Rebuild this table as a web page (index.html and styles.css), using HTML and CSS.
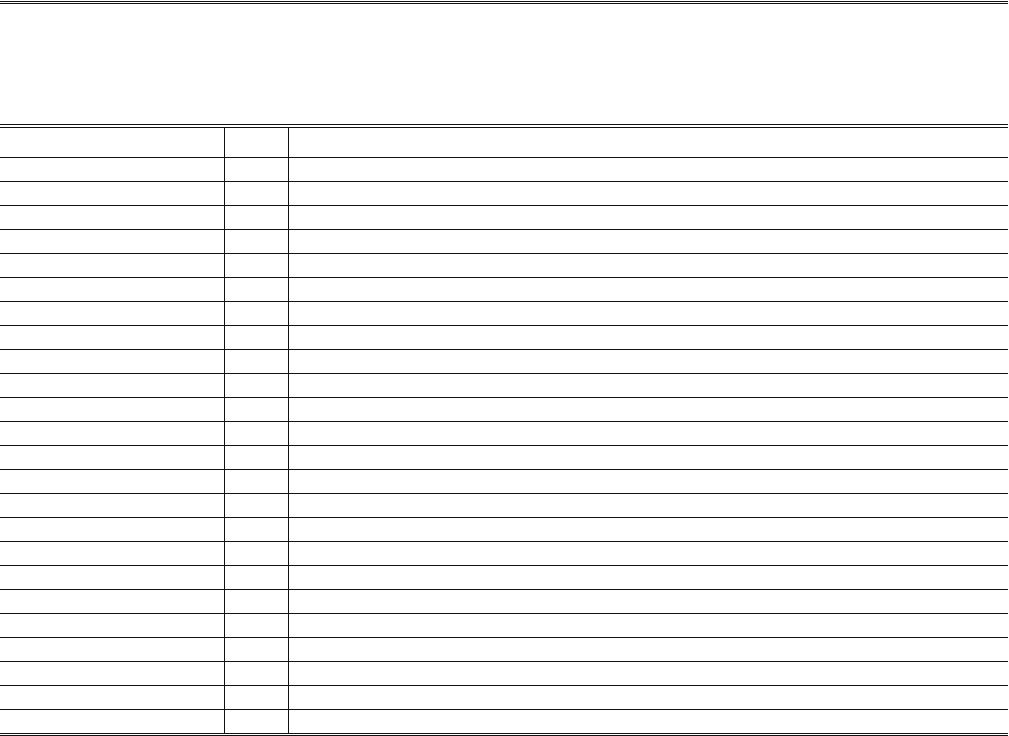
FILE: index.html
```html
<!DOCTYPE html>
<html>
<head>
<meta charset="utf-8">
<link rel="stylesheet" href="styles.css">
</head>
<body>
<div class="sheet">
  <div class="top-rule"></div>
  <div class="grid">
    <div class="row head"><div class="cell"></div><div class="cell"></div><div class="cell"></div></div>
    <div class="row"><div class="cell"></div><div class="cell"></div><div class="cell"></div></div>
    <div class="row"><div class="cell"></div><div class="cell"></div><div class="cell"></div></div>
    <div class="row"><div class="cell"></div><div class="cell"></div><div class="cell"></div></div>
    <div class="row"><div class="cell"></div><div class="cell"></div><div class="cell"></div></div>
    <div class="row"><div class="cell"></div><div class="cell"></div><div class="cell"></div></div>
    <div class="row"><div class="cell"></div><div class="cell"></div><div class="cell"></div></div>
    <div class="row"><div class="cell"></div><div class="cell"></div><div class="cell"></div></div>
    <div class="row"><div class="cell"></div><div class="cell"></div><div class="cell"></div></div>
    <div class="row"><div class="cell"></div><div class="cell"></div><div class="cell"></div></div>
    <div class="row"><div class="cell"></div><div class="cell"></div><div class="cell"></div></div>
    <div class="row"><div class="cell"></div><div class="cell"></div><div class="cell"></div></div>
    <div class="row"><div class="cell"></div><div class="cell"></div><div class="cell"></div></div>
    <div class="row"><div class="cell"></div><div class="cell"></div><div class="cell"></div></div>
    <div class="row"><div class="cell"></div><div class="cell"></div><div class="cell"></div></div>
    <div class="row"><div class="cell"></div><div class="cell"></div><div class="cell"></div></div>
    <div class="row"><div class="cell"></div><div class="cell"></div><div class="cell"></div></div>
    <div class="row"><div class="cell"></div><div class="cell"></div><div class="cell"></div></div>
    <div class="row"><div class="cell"></div><div class="cell"></div><div class="cell"></div></div>
    <div class="row"><div class="cell"></div><div class="cell"></div><div class="cell"></div></div>
    <div class="row"><div class="cell"></div><div class="cell"></div><div class="cell"></div></div>
    <div class="row"><div class="cell"></div><div class="cell"></div><div class="cell"></div></div>
    <div class="row"><div class="cell"></div><div class="cell"></div><div class="cell"></div></div>
    <div class="row"><div class="cell"></div><div class="cell"></div><div class="cell"></div></div>
    <div class="row last"><div class="cell"></div><div class="cell"></div><div class="cell"></div></div>
  </div>
</div>
</body>
</html>
```
FILE: styles.css
```css
html, body {
  margin: 0;
  padding: 0;
  background: #fff;
  font-family: "Liberation Sans", Arial, sans-serif;
}
.sheet {
  width: 1008px;
}
.top-rule {
  margin-top: 1px;
  height: 0;
  border-top: 3px double #111;
}
.grid {
  margin-top: 120px;
  border-top: 4px double #111;
  border-bottom: 3px double #111;
}
.row {
  display: grid;
  grid-template-columns: 224px 64px 1fr;
  height: 24px;
  box-sizing: border-box;
  border-bottom: 1px solid #111;
}
.row.head {
  height: 30px;
}
.row.last {
  height: 23px;
  border-bottom: 0;
}
.cell + .cell {
  border-left: 1px solid #111;
}
```
